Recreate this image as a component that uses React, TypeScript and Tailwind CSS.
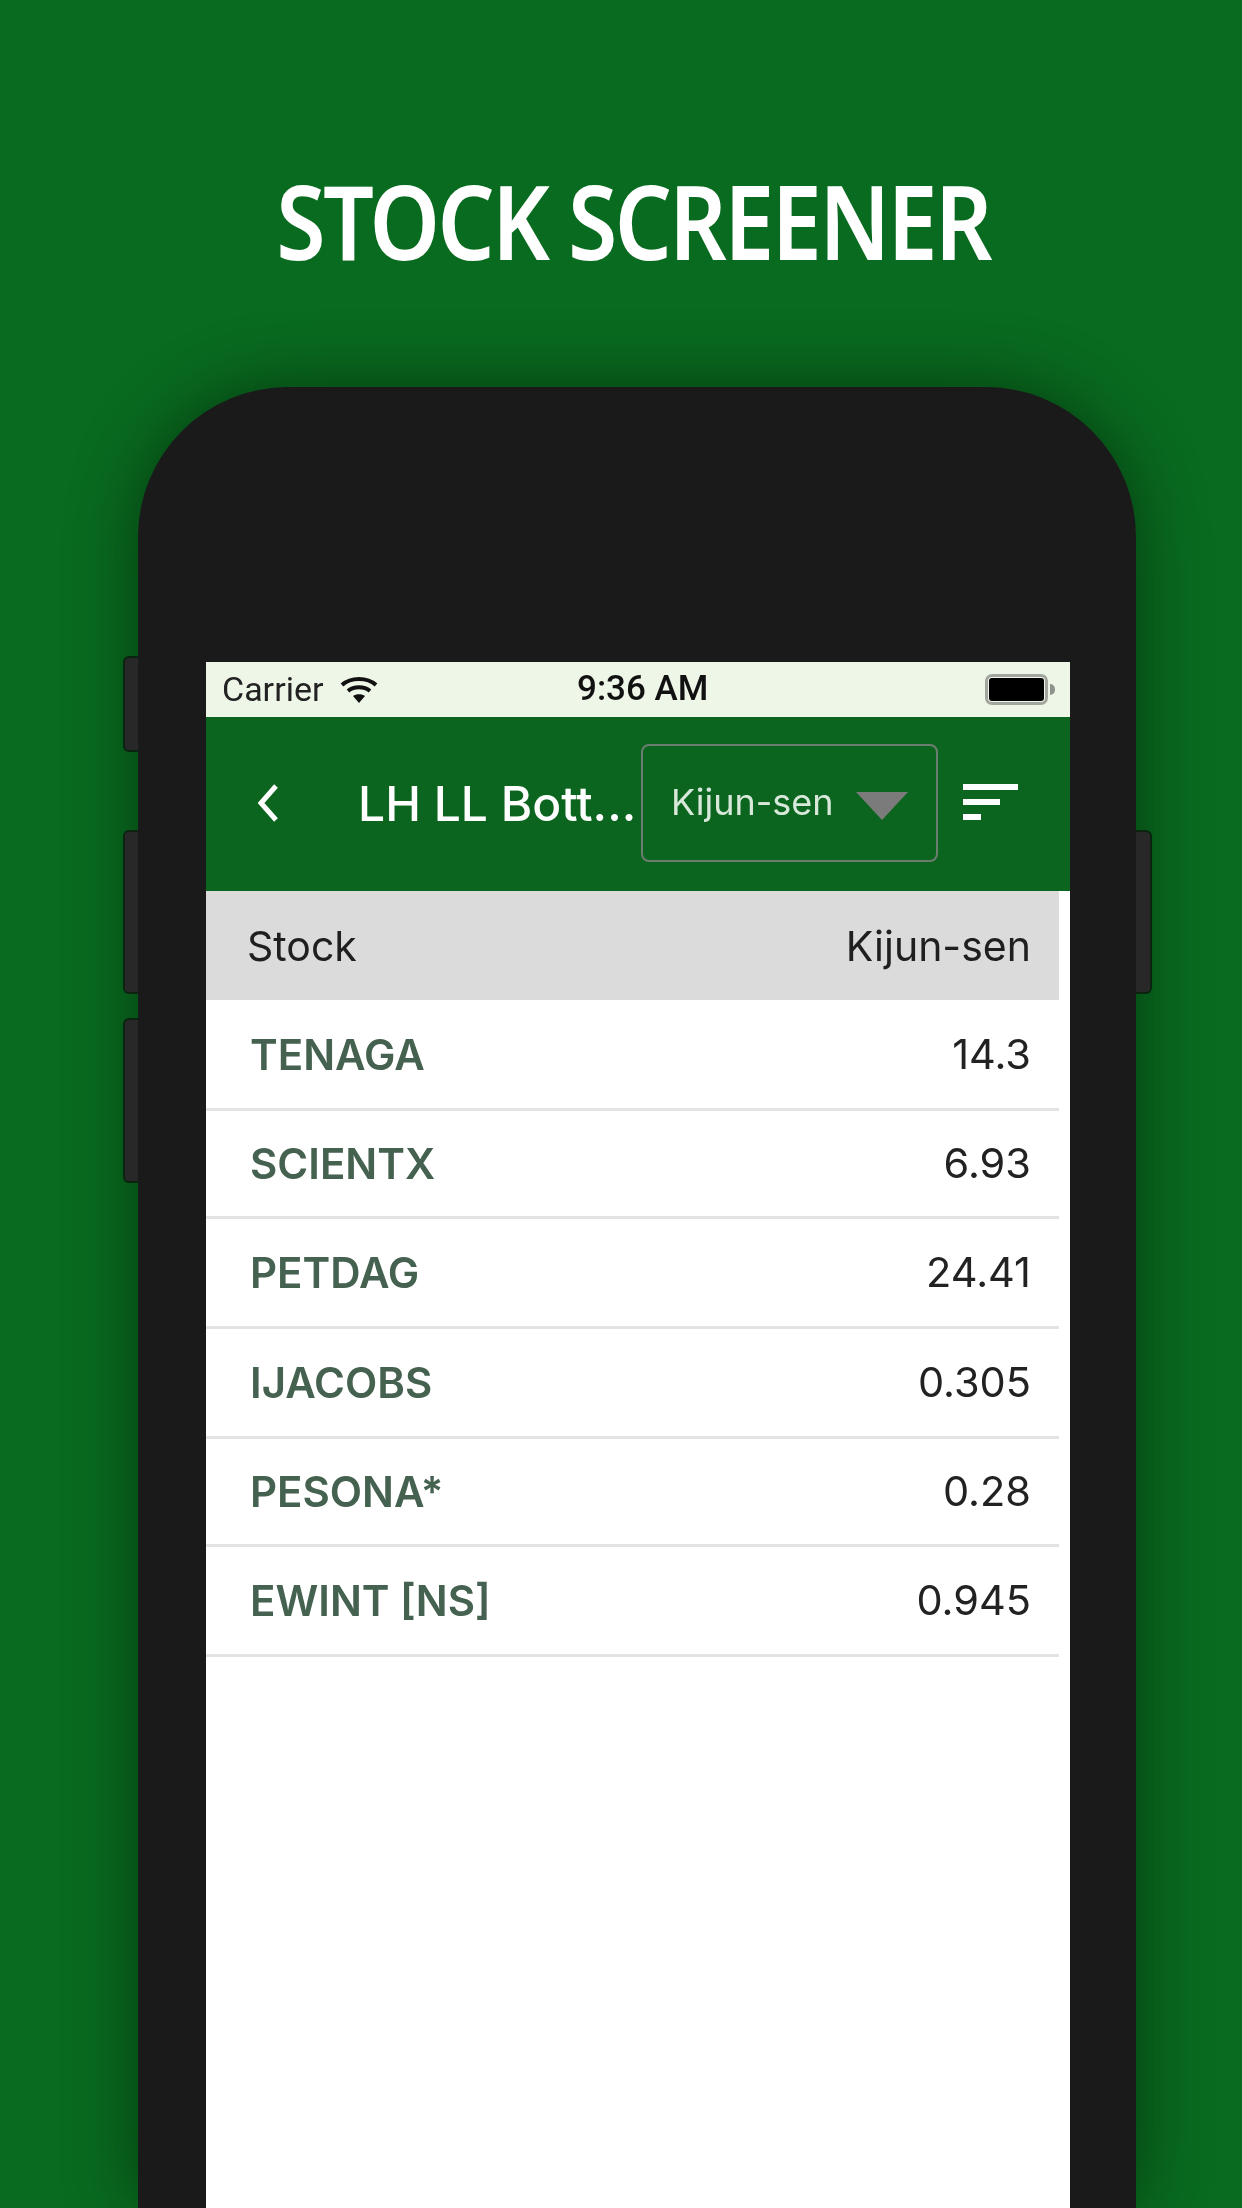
const rows = [
  ["TENAGA", "14.3", "h-[111px]"],
  ["SCIENTX", "6.93", "h-[108px]"],
  ["PETDAG", "24.41", "h-[110px]"],
  ["IJACOBS", "0.305", "h-[110px]"],
  ["PESONA*", "0.28", "h-[108px]"],
  ["EWINT [NS]", "0.945", "h-[110px]"],
];

function Wifi() {
  return (
    <svg width="38" height="28" viewBox="0 0 38 28" fill="none" stroke="#111" strokeWidth="4">
      <path d="M2 9C11 1 27 1 36 9" />
      <path d="M8 15C14 10 24 10 30 15" />
      <path d="M19 27L13 20C16 17.500 22 17.500 25 20Z" fill="#111" stroke="none" />
    </svg>
  );
}

function Battery() {
  return (
    <div className="flex items-center gap-[2px]">
      <div className="w-[63px] h-[31px] rounded-[7px] border-[3px] border-[#a3a69f] p-[1px]">
        <div className="w-full h-full rounded-[3px] bg-black" />
      </div>
      <div className="w-[5px] h-[11px] rounded-r-full bg-[#8f928b]" />
    </div>
  );
}

export default function App() {
  return (
    <div className="relative h-[2208px] w-[1242px] overflow-hidden bg-[#096b1f] flex flex-col items-center font-['Inter',sans-serif]">
      <h1 className="mt-[162px] ml-[25px] h-[116px] text-[103px] leading-[116px] font-semibold text-white tracking-[-3px] scale-x-[0.87] whitespace-nowrap font-['Noto_Sans',sans-serif]">
        STOCK SCREENER
      </h1>

      <div className="relative mt-[109px] ml-[138px] self-start w-[998px] flex-1 min-h-0 rounded-t-[150px] bg-[#1a1a1a] pl-[68px] pr-[66px] pt-[275px] shadow-[0_0_70px_rgba(0,0,0,0.45)]">
        <div className="absolute left-[-15px] top-[269px] w-[15px] h-[96px] rounded-l-[6px] bg-[#282828] border-2 border-r-0 border-[#0a2410]" />
        <div className="absolute left-[-15px] top-[443px] w-[15px] h-[164px] rounded-l-[6px] bg-[#282828] border-2 border-r-0 border-[#0a2410]" />
        <div className="absolute left-[-15px] top-[631px] w-[15px] h-[165px] rounded-l-[6px] bg-[#282828] border-2 border-r-0 border-[#0a2410]" />
        <div className="absolute right-[-16px] top-[443px] w-[16px] h-[164px] rounded-r-[6px] bg-[#282828] border-2 border-l-0 border-[#0a2410]" />

        <div className="h-full bg-white flex flex-col blur-[0.7px]">
          <div className="relative h-[55px] shrink-0 bg-[#eef6e7] flex items-center justify-between pl-[16px] pr-[15px]">
            <div className="flex items-center gap-[16px]">
              <span className="text-[34px] text-[#222] font-['Roboto',sans-serif]">Carrier</span>
              <Wifi />
            </div>
            <span className="absolute left-[371px] text-[35px] font-medium text-[#111] font-['Roboto',sans-serif]">9:36 AM</span>
            <Battery />
          </div>

          <div className="h-[174px] shrink-0 bg-[#0b651e] flex items-center text-white">
            <svg className="ml-[50px] mb-[2px]" width="24" height="40" viewBox="0 0 24 40" fill="none" stroke="#fff" strokeWidth="5">
              <path d="M20 3L5 20L20 37" />
            </svg>
            <span className="ml-[78px] w-[283px] text-[48px] font-medium whitespace-nowrap">LH LL Bott...</span>
            <div className="w-[297px] h-[118px] mt-[-2px] rounded-[8px] border-2 border-[#6c7d70] flex items-center pl-[28px]">
              <span className="text-[36px] text-[#d8e8da] mb-[2px]">Kijun-sen</span>
              <div className="ml-[22px] mt-[6px] w-0 h-0 border-l-[26px] border-r-[26px] border-t-[28px] border-l-transparent border-r-transparent border-t-[#7b7b7b]" />
            </div>
            <div className="ml-[25px] mb-[4px] flex flex-col gap-[9px]">
              <div className="w-[55px] h-[6px] bg-white" />
              <div className="w-[37px] h-[6px] bg-white" />
              <div className="w-[18px] h-[6px] bg-white" />
            </div>
          </div>

          <div className="flex-1 min-h-0 mr-[11px]">
            <div className="h-[109px] pt-[2px] bg-[#dbdbdb] flex items-center justify-between pl-[41px] pr-[28px] text-[41px] text-[#1f1f1f]">
              <span>Stock</span>
              <span>Kijun-sen</span>
            </div>
            {rows.map(([name, value, h]) => (
              <div key={name} className={`${h} border-b-[3px] border-[#e3e3e3] flex items-center justify-between pl-[44px] pr-[28px]`}>
                <span className="text-[42px] font-semibold text-[#45614f]">{name}</span>
                <span className="text-[41.5px] text-[#222]">{value}</span>
              </div>
            ))}
          </div>
        </div>
      </div>
    </div>
  );
}
